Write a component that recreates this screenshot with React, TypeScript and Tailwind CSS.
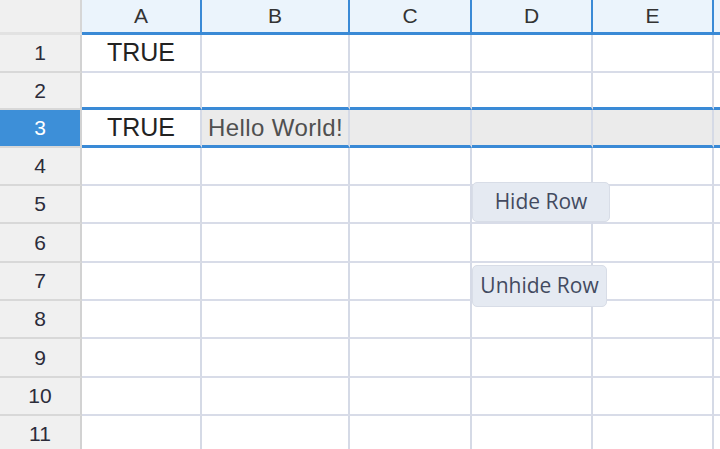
import React from "react";

const cols = ["A", "B", "C", "D", "E", ""];
const colW = ["w-[120px]", "w-[148px]", "w-[122px]", "w-[121px]", "w-[121px]", "w-[40px]"];
const rowH = [
  "h-[38px]",
  "h-[37px]",
  "h-[38px]",
  "h-[38px]",
  "h-[38px]",
  "h-[39px]",
  "h-[38px]",
  "h-[38px]",
  "h-[39px]",
  "h-[38px]",
  "h-[38px]",
];

export default function App() {
  return (
    <div className="relative w-[720px] h-[449px] overflow-hidden bg-white font-['Liberation_Sans',Arial,sans-serif]">
      {/* header row */}
      <div className="flex h-[35px]">
        <div className="w-[82px] shrink-0 bg-[#f0f0f0] border-r-2 border-r-[#d6d6d6] border-b-[3px] border-b-[#e2e2e2]" />
        {cols.map((c, i) => (
          <div
            key={i}
            className={
              colW[i] +
              " shrink-0 bg-[#ebf4fc] border-r-2 border-r-[#3a8ad6] border-b-[3px] border-b-[#3a8ad6] flex items-center justify-center text-[21px] text-[#333]"
            }
          >
            {c}
          </div>
        ))}
      </div>
      {rowH.map((h, r) => {
        const rowNum = r + 1;
        const sel = rowNum === 3;
        const blueBottom = rowNum === 2 || rowNum === 3;
        return (
          <div key={r} className={"flex " + h}>
            <div
              className={
                "w-[82px] shrink-0 border-r-2 border-r-[#d2d2d2] border-b-2 border-b-[#d8d8d8] flex items-center justify-center text-[21px] " +
                (sel ? "bg-[#3d8fd8] text-white" : "bg-[#f0f0f0] text-[#2c2c3a]")
              }
            >
              {rowNum}
            </div>
            {colW.map((w, c) => (
              <div
                key={c}
                className={
                  w +
                  " shrink-0 border-r-2 border-r-[#d5dae6] flex items-center overflow-visible whitespace-nowrap " +
                  (blueBottom ? "border-b-[3px] border-b-[#3a8ad6] " : "border-b-2 border-b-[#d8dce8] ") +
                  (sel && c > 0 ? "bg-[#ebebeb] " : "bg-white ") +
                  (c === 0 ? "justify-center" : "justify-start pl-[6px]")
                }
              >
                {c === 0 && (rowNum === 1 || rowNum === 3) && (
                  <span className="text-[25px] text-[#222]">TRUE</span>
                )}
                {c === 1 && rowNum === 3 && (
                  <span className="text-[24px] text-[#505050] tracking-[0.4px]">Hello World!</span>
                )}
              </div>
            ))}
          </div>
        );
      })}
      {/* buttons overlay */}
      <button className="absolute left-[472px] top-[182px] w-[138px] h-[40px] rounded-[5px] bg-[#e5eaf2] border border-[#d8dde7] flex items-center justify-center text-[21px] font-medium text-[#434a60] font-['Open_Sans',sans-serif]">
        Hide Row
      </button>
      <button className="absolute left-[472px] top-[265px] w-[135px] h-[42px] rounded-[5px] bg-[#e5eaf2] border border-[#d8dde7] flex items-center justify-center text-[21px] font-medium text-[#434a60] font-['Open_Sans',sans-serif]">
        Unhide Row
      </button>
    </div>
  );
}
